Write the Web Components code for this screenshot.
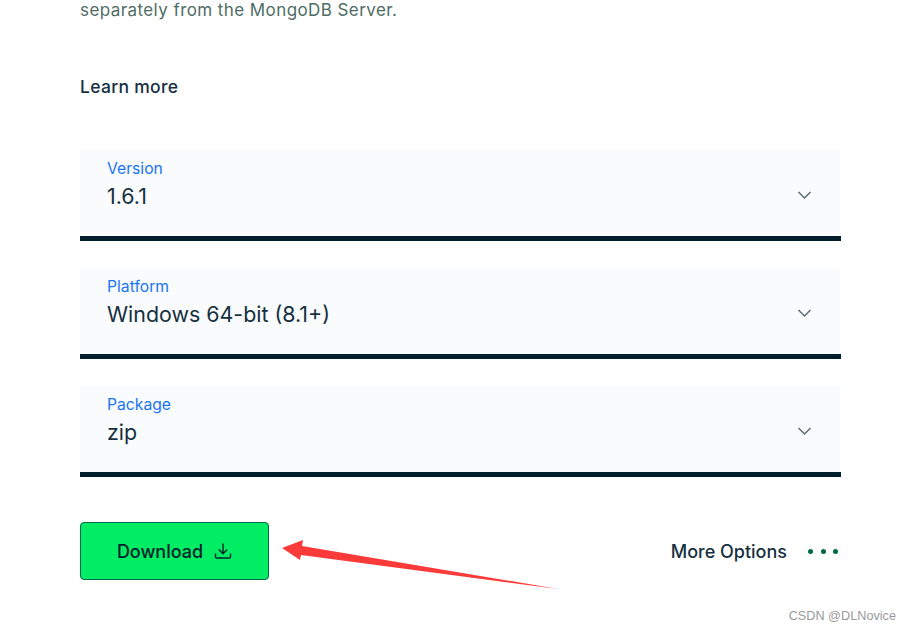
<!DOCTYPE html>
<html>
<head>
<meta charset="utf-8">
<style>
  html, body { margin: 0; padding: 0; background: #fff; }
  body { height: 631px; overflow: hidden; position: relative; font-family: "Inter", "Liberation Sans", sans-serif; }
</style>
</head>
<body>
<download-panel>
  <select-field label="Version" value="1.6.1"></select-field>
  <select-field label="Platform" value="Windows 64-bit (8.1+)"></select-field>
  <select-field label="Package" value="zip"></select-field>
</download-panel>
<red-arrow></red-arrow>
<water-mark>CSDN @DLNovice</water-mark>

<script>
class SelectField extends HTMLElement {
  constructor() {
    super();
    this.shadowDOM = this.attachShadow({ mode: "open" });
  }

  connectedCallback() {
    this.shadowDOM.innerHTML = `
      <style>
        :host {
          display: flex;
          justify-content: space-between;
          box-sizing: border-box;
          height: 91px;
          padding: 10px 29px 0 27px;
          background: #f9fbfd;
          border-bottom: 5px solid #001e2b;
        }
        .label {
          font-size: 15.7px;
          line-height: 18px;
          color: #1a75f5;
        }
        .value {
          font-size: 21.4px;
          line-height: 30px;
          margin-top: 3px;
          color: #16303f;
        }
        svg { margin-top: 31px; }
      </style>
      <div>
        <div class="label">${this.getAttribute("label")}</div>
        <div class="value">${this.getAttribute("value")}</div>
      </div>
      <svg width="15" height="9" viewBox="0 0 15 9" fill="none" stroke="#5c6c75" stroke-width="1.5">
        <path d="M1.5 1 7.5 7l6-6"/>
      </svg>
    `;
  }
}

class DownloadPanel extends HTMLElement {
  constructor() {
    super();
    this.shadowDOM = this.attachShadow({ mode: "open" });
  }

  connectedCallback() {
    this.shadowDOM.innerHTML = `
      <style>
        :host {
          display: block;
          box-sizing: border-box;
          width: 841px;
          padding-left: 80px;
        }
        p { margin: 0; }
        .intro {
          font-size: 17px;
          line-height: 20px;
          letter-spacing: .42px;
          color: #4f6d64;
        }
        .learn {
          margin-top: 55px;
          font-size: 17.5px;
          line-height: 24px;
          letter-spacing: .3px;
          font-weight: 500;
          color: #16303f;
        }
        .fields {
          display: flex;
          flex-direction: column;
          gap: 27px;
          margin-top: 51px;
        }
        .actions {
          display: flex;
          align-items: center;
          justify-content: space-between;
          margin-top: 45px;
        }
        .btn {
          display: flex;
          align-items: center;
          justify-content: center;
          gap: 11px;
          box-sizing: border-box;
          width: 189px;
          height: 58px;
          background: #00ed64;
          border: 1px solid #00684a;
          border-radius: 4px;
          font-size: 18px;
          font-weight: 500;
          color: #001e2b;
        }
        .more {
          display: flex;
          align-items: center;
          gap: 21px;
          font-size: 18px;
          font-weight: 500;
          color: #16303f;
        }
        .dots { display: flex; gap: 7.5px; margin-right: 3px; }
        .dots i { width: 5px; height: 5px; border-radius: 50%; background: #00684a; }
      </style>
      <p class="intro">separately from the MongoDB Server.</p>
      <p class="learn">Learn more</p>
      <div class="fields"><slot></slot></div>
      <div class="actions">
        <div class="btn">
          <span>Download</span>
          <svg width="18" height="18" viewBox="0 0 18 18" fill="none" stroke="#001e2b" stroke-width="1.4">
            <path d="M9 1.5v10M4.8 7.5 9 11.7l4.2-4.2M1.5 11.5v3.2c0 .8.5 1.3 1.3 1.3h12.4c.8 0 1.3-.5 1.3-1.3v-3.2"/>
          </svg>
        </div>
        <div class="more">
          <span>More Options</span>
          <div class="dots"><i></i><i></i><i></i></div>
        </div>
      </div>
    `;
  }
}

class RedArrow extends HTMLElement {
  constructor() {
    super();
    this.shadowDOM = this.attachShadow({ mode: "open" });
  }

  connectedCallback() {
    this.shadowDOM.innerHTML = `
      <style>
        :host { position: absolute; left: 280px; top: 538px; width: 280px; height: 54px; display: block; }
        svg { display: block; }
      </style>
      <svg width="280" height="54" viewBox="0 0 280 54">
        <path d="M2 10 23 2 22 8 278 51 21 17 20 22Z" fill="#fb3a3a"/>
      </svg>
    `;
  }
}

class WaterMark extends HTMLElement {
  constructor() {
    super();
    this.shadowDOM = this.attachShadow({ mode: "open" });
  }

  connectedCallback() {
    this.shadowDOM.innerHTML = `
      <style>
        :host {
          position: absolute;
          right: 15px;
          top: 608px;
          font: 12.7px/16px "Liberation Sans", sans-serif;
          color: #9a9a9a;
        }
      </style>
      <slot></slot>
    `;
  }
}

customElements.define("select-field", SelectField);
customElements.define("download-panel", DownloadPanel);
customElements.define("red-arrow", RedArrow);
customElements.define("water-mark", WaterMark);
</script>
</body>
</html>
